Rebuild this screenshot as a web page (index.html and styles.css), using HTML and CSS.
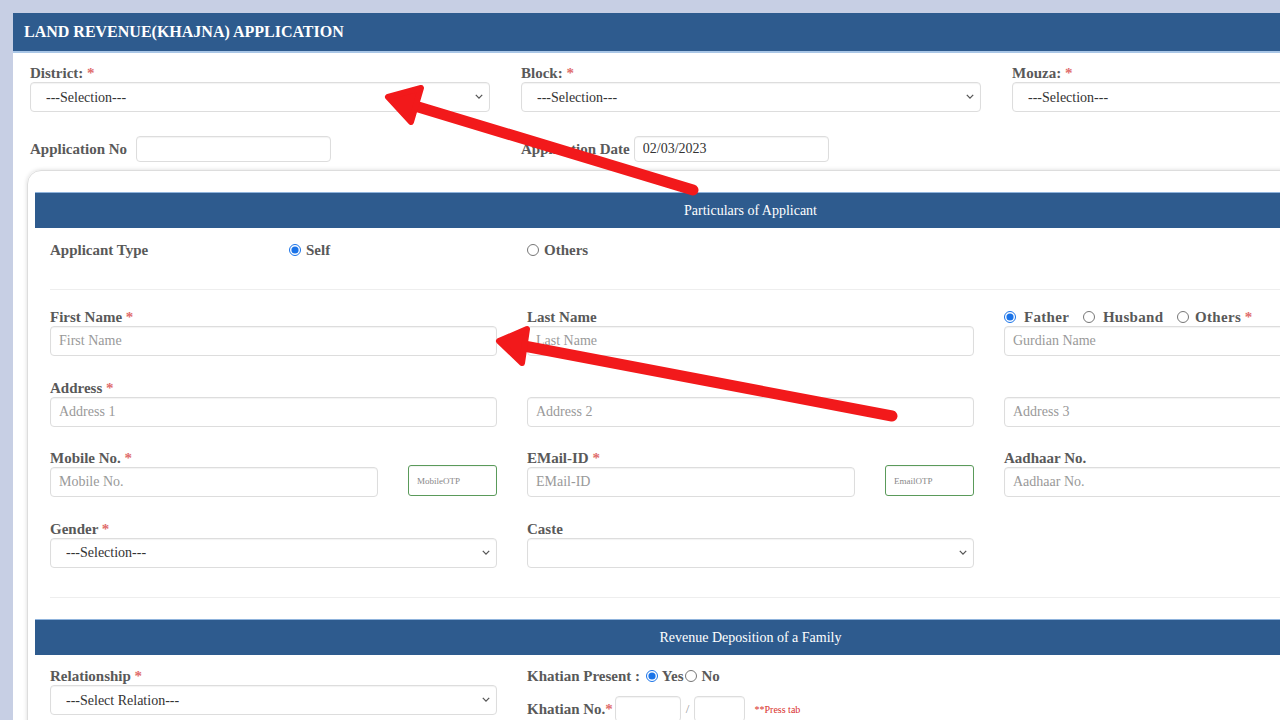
FILE: index.html
```html
<!DOCTYPE html>
<html lang="en">
<head>
    <meta charset="UTF-8">
    <meta name="viewport" content="width=device-width, initial-scale=1.0">
    <title>Land Revenue (Khajna) Application</title>
    <link rel="stylesheet" href="styles.css">
</head>
<body>
    <div class="page">
        <div class="title-bar">LAND REVENUE(KHAJNA) APPLICATION</div>
        <div class="panel">
            <div class="top-grid">
                <div class="field">
                    <label>District: <span class="req">*</span></label>
                    <div class="select-wrap">
                        <select><option>---Selection---</option></select>
                        <svg class="chev" viewBox="0 0 10 6"><path d="M1 1l4 4 4-4" fill="none" stroke="#555" stroke-width="1.6"/></svg>
                    </div>
                </div>
                <div class="field">
                    <label>Block: <span class="req">*</span></label>
                    <div class="select-wrap">
                        <select><option>---Selection---</option></select>
                        <svg class="chev" viewBox="0 0 10 6"><path d="M1 1l4 4 4-4" fill="none" stroke="#555" stroke-width="1.6"/></svg>
                    </div>
                </div>
                <div class="field">
                    <label>Mouza: <span class="req">*</span></label>
                    <div class="select-wrap">
                        <select><option>---Selection---</option></select>
                        <svg class="chev" viewBox="0 0 10 6"><path d="M1 1l4 4 4-4" fill="none" stroke="#555" stroke-width="1.6"/></svg>
                    </div>
                </div>
            </div>
            <div class="top-grid app-row">
                <div class="inline-field">
                    <label class="app-no">Application No</label>
                    <input type="text" class="small-input">
                </div>
                <div class="inline-field">
                    <label class="app-date">Application Date</label>
                    <input type="text" class="small-input" value="02/03/2023">
                </div>
            </div>

            <div class="fieldset">
                <div class="section-bar">Particulars of Applicant</div>
                <div class="inner">
                    <div class="type-row">
                        <span class="lbl">Applicant Type</span>
                        <span class="lbl"><input type="radio" name="atype" checked>Self</span>
                        <span class="lbl"><input type="radio" name="atype">Others</span>
                    </div>
                    <hr class="divider">
                    <div class="grid">
                        <div class="group">
                            <label>First Name <span class="req">*</span></label>
                            <input type="text" placeholder="First Name">
                        </div>
                        <div class="group">
                            <label>Last Name</label>
                            <input type="text" placeholder="Last Name">
                        </div>
                        <div class="group">
                            <label class="rel-label">
                                <input type="radio" name="rel" checked><span class="opt">Father</span>
                                <input type="radio" name="rel"><span class="opt">Husband</span>
                                <input type="radio" name="rel" class="tight"><span class="opt last">Others</span> <span class="req">*</span>
                            </label>
                            <input type="text" placeholder="Gurdian Name">
                        </div>

                        <div class="group">
                            <label>Address <span class="req">*</span></label>
                            <input type="text" placeholder="Address 1">
                        </div>
                        <div class="group">
                            <label>&nbsp;</label>
                            <input type="text" placeholder="Address 2">
                        </div>
                        <div class="group">
                            <label>&nbsp;</label>
                            <input type="text" placeholder="Address 3">
                        </div>

                        <div class="group">
                            <label>Mobile No. <span class="req">*</span></label>
                            <div class="otp-row">
                                <input type="text" placeholder="Mobile No.">
                                <input type="text" class="otp" placeholder="MobileOTP">
                            </div>
                        </div>
                        <div class="group">
                            <label>EMail-ID <span class="req">*</span></label>
                            <div class="otp-row">
                                <input type="text" placeholder="EMail-ID">
                                <input type="text" class="otp" placeholder="EmailOTP">
                            </div>
                        </div>
                        <div class="group">
                            <label>Aadhaar No.</label>
                            <input type="text" placeholder="Aadhaar No.">
                        </div>

                        <div class="group">
                            <label>Gender <span class="req">*</span></label>
                            <div class="select-wrap">
                                <select><option>---Selection---</option></select>
                                <svg class="chev" viewBox="0 0 10 6"><path d="M1 1l4 4 4-4" fill="none" stroke="#555" stroke-width="1.6"/></svg>
                            </div>
                        </div>
                        <div class="group">
                            <label>Caste</label>
                            <div class="select-wrap">
                                <select><option></option></select>
                                <svg class="chev" viewBox="0 0 10 6"><path d="M1 1l4 4 4-4" fill="none" stroke="#555" stroke-width="1.6"/></svg>
                            </div>
                        </div>
                    </div>
                    <hr class="divider divider-bottom">
                </div>

                <div class="section-bar">Revenue Deposition of a Family</div>
                <div class="inner">
                    <div class="grid family">
                        <div class="group">
                            <label>Relationship <span class="req">*</span></label>
                            <div class="select-wrap">
                                <select><option>---Select Relation---</option></select>
                                <svg class="chev" viewBox="0 0 10 6"><path d="M1 1l4 4 4-4" fill="none" stroke="#555" stroke-width="1.6"/></svg>
                            </div>
                        </div>
                        <div class="group">
                            <div class="lbl kp">Khatian Present : <input type="radio" name="kp" checked>Yes<input type="radio" name="kp">No</div>
                            <div class="khatian">
                                <span class="lbl">Khatian No.<span class="req">*</span></span>
                                <input type="text" class="kh1">
                                <span class="slash">/</span>
                                <input type="text" class="kh2">
                                <span class="hint">**Press tab</span>
                            </div>
                        </div>
                    </div>
                </div>
            </div>
        </div>
    </div>

    <!-- annotation arrows drawn over the form -->
    <svg class="arrows" width="1280" height="720" viewBox="0 0 1280 720">
        <line x1="415" y1="106" x2="693" y2="190" stroke="#f2191b" stroke-width="11" stroke-linecap="round"/>
        <polygon points="388,97 421,88 411,122" fill="#f2191b" stroke="#f2191b" stroke-width="6" stroke-linejoin="round"/>
        <line x1="524" y1="346" x2="892" y2="416" stroke="#f2191b" stroke-width="11" stroke-linecap="round"/>
        <polygon points="499,341 527,329 522,363" fill="#f2191b" stroke="#f2191b" stroke-width="6" stroke-linejoin="round"/>
    </svg>
</body>
</html>
```

FILE: styles.css
```css
body {
    margin: 0;
    background: #c7cfe4;
    font-family: "Liberation Serif", "Times New Roman", serif;
    overflow: hidden;
}
.page {
    width: 1490px;
    min-height: 720px;
    margin: 13px 0 0 13px;
    background: white;
}
.title-bar {
    background: #2e5b8e;
    color: white;
    font-weight: bold;
    font-size: 16px;
    height: 38px;
    line-height: 38px;
    padding-left: 11px;
    border-bottom: 2px solid #a9c6e6;
}
.panel {
    padding-top: 12px;
}
.top-grid {
    display: grid;
    grid-template-columns: repeat(3, 460px);
    column-gap: 31px;
    padding-left: 17px;
}
label, .lbl {
    display: block;
    font-weight: bold;
    font-size: 15px;
    line-height: 17px;
    color: #595959;
}
.req {
    color: #e06c6c;
}
select, input[type="text"] {
    box-sizing: border-box;
    width: 100%;
    height: 30px;
    border: 1px solid #ddd;
    border-radius: 4px;
    background: white;
    font-family: "Liberation Serif", "Times New Roman", serif;
    font-size: 14px;
    color: #333;
    box-shadow: inset 0 1px 1px rgba(0, 0, 0, 0.05);
}
select {
    appearance: none;
    padding: 0 24px 0 15px;
}
.select-wrap {
    position: relative;
}
.chev {
    position: absolute;
    right: 7px;
    top: 12px;
    width: 8px;
    height: 5px;
    pointer-events: none;
}
input[type="text"] {
    padding: 0 8px;
}
input::placeholder {
    color: #999;
}
input[type="radio"] {
    width: 12px;
    height: 12px;
    margin: 0 4px 0 0;
    vertical-align: -1px;
    accent-color: #1a73e8;
}
.app-row {
    margin-top: 24px;
}
.inline-field {
    display: flex;
    align-items: center;
}
.app-no {
    margin-right: 9px;
}
.app-date {
    margin-right: 4px;
}
.small-input {
    width: 195px !important;
    height: 26px !important;
}
.fieldset {
    margin: 8px 0 0 14px;
    padding: 21px 0 0 7px;
    border: 1px solid #ddd;
    border-radius: 14px;
    box-shadow: 0 0 4px rgba(0, 0, 0, 0.15);
    min-height: 600px;
}
.section-bar {
    width: 1431px;
    height: 35px;
    line-height: 35px;
    background: #2e5b8e;
    border-top: 1px solid #8fb3dc;
    color: white;
    text-align: center;
    font-size: 14px;
}
.inner {
    padding-left: 15px;
}
.type-row {
    display: grid;
    grid-template-columns: 239px 238px 447px;
    margin-top: 14px;
}
.type-row input[type="radio"] {
    margin: 0 5px 0 0;
}
.divider {
    width: 1401px;
    margin: 30px 0 19px;
    border: none;
    border-top: 1px solid #eee;
}
.divider-bottom {
    margin: 6px 0 21px;
}
.grid {
    display: grid;
    grid-template-columns: repeat(3, 447px);
    column-gap: 30px;
}
.group {
    margin-bottom: 23.5px;
}
.family {
    margin-top: 13px;
}
.rel-label .opt {
    margin-right: 10px;
    letter-spacing: 0.3px;
}
.rel-label .opt.last {
    margin-right: 0;
}
.rel-label input {
    margin-right: 8px;
}
.rel-label input.tight {
    margin-right: 6px;
}
.otp-row {
    display: flex;
    gap: 30px;
}
.otp-row .otp {
    flex: 0 0 89px;
    height: 31px;
    margin-top: -2px;
    border: 1px solid #5a9a5a;
    border-radius: 3px;
    font-size: 9px;
}
.otp::placeholder {
    color: #888;
}
.kp input[type="radio"] {
    margin: 0 4px 0 2px;
}
.khatian {
    display: flex;
    align-items: center;
    margin-top: 11px;
}
.khatian .lbl {
    margin-right: 2px;
}
.khatian input[type="text"] {
    height: 26px;
    padding: 0 4px;
}
.kh1 {
    width: 66px !important;
}
.kh2 {
    width: 51px !important;
}
.slash {
    color: #999;
    font-size: 13px;
    margin: 0 5px;
}
.hint {
    color: #d9302c;
    font-size: 10px;
    margin-left: 9px;
}
.arrows {
    position: absolute;
    top: 0;
    left: 0;
    pointer-events: none;
}
```
